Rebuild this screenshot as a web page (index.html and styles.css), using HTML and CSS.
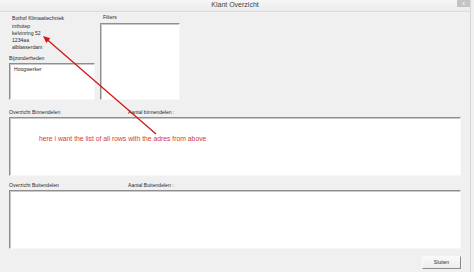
FILE: index.html
```html
<!DOCTYPE html>
<html lang="nl">
<head>
<meta charset="utf-8">
<title>Klant Overzicht</title>
<link rel="stylesheet" href="styles.css">
</head>
<body>
<div class="window">
  <div class="titlebar">
    <span class="title">Klant Overzicht</span>
    <span class="close">x</span>
  </div>
  <div class="content">
    <div class="top">
      <div class="left-col">
        <div class="address">
          <div>Bothof Klimaattechniek</div>
          <div>imhotep</div>
          <div>kelvinring 52</div>
          <div>1234aa</div>
          <div>alblasserdam</div>
        </div>
        <div class="label">Bijzonderheden</div>
        <div class="listbox"><div class="item">Hoogwerker</div></div>
      </div>
      <div class="filters-col">
        <div class="label filters-label">Filters</div>
        <div class="listbox"></div>
      </div>
    </div>
    <div class="section first">
      <div class="section-head"><span>Overzicht Binnendelen</span><span>Aantal binnendelen :</span></div>
      <div class="listbox wide"><p class="note">here i want the list of all rows with the adres from above</p></div>
    </div>
    <div class="section second">
      <div class="section-head"><span>Overzicht Buitendelen</span><span>Aantal Buitendelen :</span></div>
      <div class="listbox wide"></div>
    </div>
    <div class="actions"><button class="btn">Sluiten</button></div>
  </div>
  <svg class="arrow" width="474" height="272" viewBox="0 0 474 272">
    <line x1="156" y1="134" x2="47" y2="39.5" stroke="#d01818" stroke-width="1.3"/>
    <polygon points="43,36 50.3,38.3 46.3,42.9" fill="#d01818"/>
  </svg>
</div>
</body>
</html>
```
FILE: styles.css
```css
html, body {
  margin: 0;
  padding: 0;
}
body {
  width: 474px;
  height: 272px;
  overflow: hidden;
  background: #f0f0f0;
  font-family: "Liberation Sans", Arial, sans-serif;
  font-size: 5.1px;
  color: #2a2a2a;
}
.window {
  position: relative;
  width: 470px;
  height: 272px;
  border-right: 1px solid #d6d6d6;
  display: flex;
  flex-direction: column;
}
.titlebar {
  height: 11px;
  border-bottom: 1px solid #dcdcdc;
  background: linear-gradient(#f6f6f6, #ebebeb);
  display: grid;
  grid-template-columns: 1fr auto 1fr;
}
.title {
  grid-column: 2;
  font-size: 7px;
  line-height: 10px;
  color: #444;
}
.close {
  grid-column: 3;
  justify-self: end;
  align-self: start;
  width: 13px;
  height: 7px;
  background: #c4c4c4;
  color: #fff;
  font-size: 5px;
  line-height: 7px;
  text-align: center;
}
.content {
  padding: 0 9px 0 9px;
  display: flex;
  flex-direction: column;
}
.top {
  height: 88px;
  display: flex;
  gap: 5px;
}
.left-col {
  width: 86px;
  display: flex;
  flex-direction: column;
  padding-top: 3.4px;
}
.address {
  padding-left: 3px;
  line-height: 7.2px;
}
.label {
  line-height: 7.2px;
}
.left-col .label {
  margin-top: 4px;
}
.filters-col {
  width: 80px;
  display: flex;
  flex-direction: column;
  padding-top: 2.4px;
}
.filters-label {
  padding-left: 3px;
  margin-bottom: 1.4px;
}
.listbox {
  flex: 1;
  box-sizing: border-box;
  background: #fff;
  border: 1px solid;
  border-color: #8e8e8e #f7f7f7 #f7f7f7 #8e8e8e;
  box-shadow: inset 1px 1px 0 #c9c9c9;
}
.item {
  padding: 2px 0 0 4px;
  line-height: 7.2px;
}
.section-head {
  display: grid;
  grid-template-columns: 119px 1fr;
  line-height: 7.2px;
}
.section.first {
  margin-top: 9.4px;
}
.section.second {
  margin-top: 6px;
}
.section .listbox.wide {
  height: 59px;
  margin-top: 0.4px;
}
.note {
  margin: 0;
  padding: 17px 0 0 29px;
  font-size: 6.8px;
  line-height: 8px;
  color: #cf3b3b;
}
.actions {
  display: flex;
  justify-content: flex-end;
  margin-top: 7px;
}
.btn {
  width: 39px;
  height: 13px;
  padding: 0;
  font-family: inherit;
  font-size: 5px;
  color: #2a2a2a;
  background: linear-gradient(#fafafa, #ececec);
  border: 1px solid;
  border-color: #f8f8f8 #8a8a8a #8a8a8a #f8f8f8;
}
.arrow {
  position: absolute;
  left: 0;
  top: 0;
  pointer-events: none;
}
```
